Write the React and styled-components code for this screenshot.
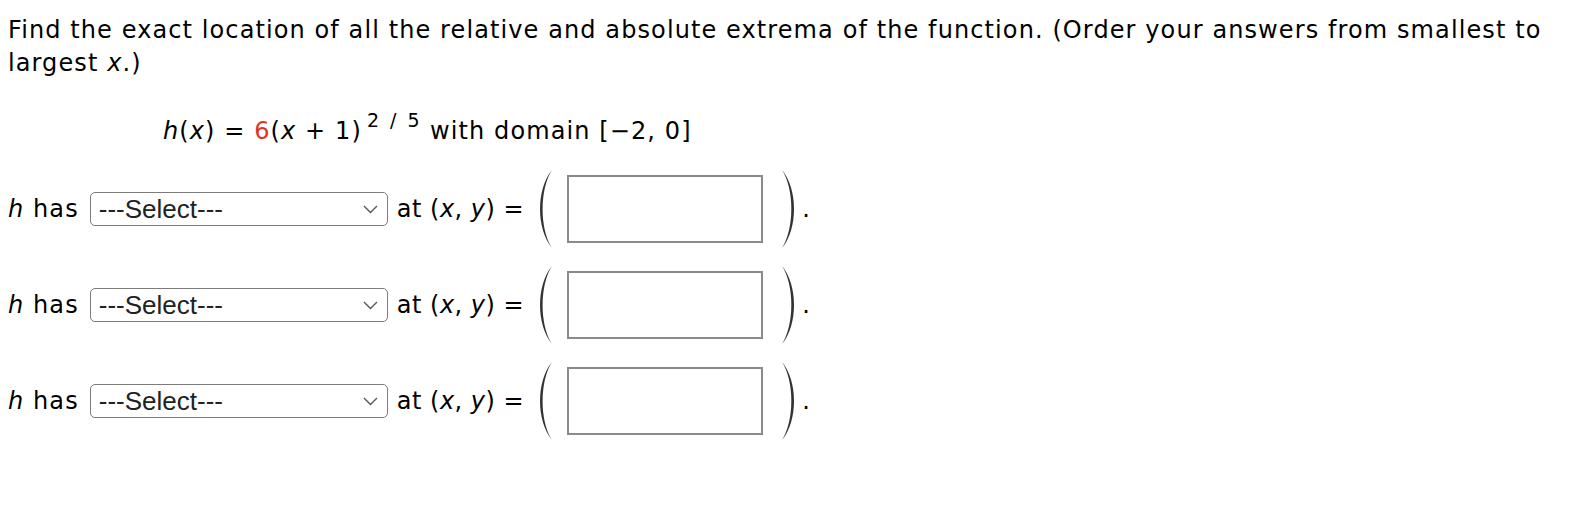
import React from "react";
import styled, { createGlobalStyle } from "styled-components";

const GlobalStyle = createGlobalStyle`
  body {
    margin: 0;
    background: #ffffff;
    color: #000000;
    font-family: "DejaVu Sans", Verdana, sans-serif;
  }
`;

const Page = styled.div`
  padding: 14px 8px 0 8px;
  font-size: 24px;
  letter-spacing: 1.1px;
`;

const Question = styled.p`
  margin: 0;
  line-height: 33px;
`;

const Var = styled.i`
  font-style: italic;
`;

const Formula = styled.div`
  margin: 35px 0 0 155px;
  line-height: 33px;
  white-space: nowrap;
`;

const Coef = styled.span`
  color: #e5321f;
`;

const Power = styled.sup`
  font-size: 19px;
  vertical-align: 12px;
  line-height: 0;
  letter-spacing: 2.5px;
  margin: 0 8px 0 5px;
`;

const Rows = styled.div`
  margin-top: 21px;
  display: flex;
  flex-direction: column;
  gap: 16px;
`;

const Row = styled.div`
  display: flex;
  align-items: center;
  height: 80px;
  white-space: nowrap;
`;

const Label = styled.span`
  margin-right: 11px;
`;

const SelectWrap = styled.div`
  position: relative;
  width: 298px;
  height: 34px;
  box-sizing: border-box;
  border: 1.5px solid #7c7c7c;
  border-radius: 5px;
  display: flex;
  align-items: center;
  padding-left: 8px;
  font-family: "Liberation Sans", Arial, sans-serif;
  font-size: 26px;
  letter-spacing: 0;
  color: #222222;
  margin-right: 9px;
`;

const Chevron = styled.svg`
  position: absolute;
  right: 9px;
  top: 50%;
  margin-top: -4px;
`;

const Coords = styled.span`
  letter-spacing: 0.5px;
  margin-right: 12px;
`;

const Paren = styled.svg`
  display: block;
  flex: none;
`;

const AnswerBox = styled.div`
  width: 196px;
  height: 68px;
  box-sizing: border-box;
  border: 2px solid #8a8a8a;
  margin: 0 17px 0 13px;
  background: #fff;
`;

const Dot = styled.span`
  margin-left: 4px;
`;

const LeftParen = () => (
  <Paren width="18" height="80" viewBox="0 0 18 80">
    <path d="M16 1 C0 20 0 60 16 79 C3.5 60 3.5 20 16 1 Z" fill="#333" />
  </Paren>
);

const RightParen = () => (
  <Paren width="18" height="80" viewBox="0 0 18 80">
    <path d="M2 1 C18 20 18 60 2 79 C14.5 60 14.5 20 2 1 Z" fill="#333" />
  </Paren>
);

const ExtremaRow = () => (
  <Row>
    <Label>
      <Var>h</Var> has
    </Label>
    <SelectWrap>
      ---Select---
      <Chevron width="15" height="9" viewBox="0 0 15 9">
        <path d="M1 1 L7.5 7.5 L14 1" fill="none" stroke="#555" strokeWidth="1.4" />
      </Chevron>
    </SelectWrap>
    <Coords>
      at (<Var>x</Var>, <Var>y</Var>) =
    </Coords>
    <LeftParen />
    <AnswerBox />
    <RightParen />
    <Dot>.</Dot>
  </Row>
);

export default function App() {
  return (
    <>
      <GlobalStyle />
      <Page>
        <Question>
          Find the exact location of all the relative and absolute extrema of the function. (Order
          your answers from smallest to largest <Var>x</Var>.)
        </Question>
        <Formula>
          <Var>h</Var>(<Var>x</Var>) = <Coef>6</Coef>(<Var>x</Var> + 1)
          <Power>2 / 5</Power>with domain [−2, 0]
        </Formula>
        <Rows>
          <ExtremaRow />
          <ExtremaRow />
          <ExtremaRow />
        </Rows>
      </Page>
    </>
  );
}
